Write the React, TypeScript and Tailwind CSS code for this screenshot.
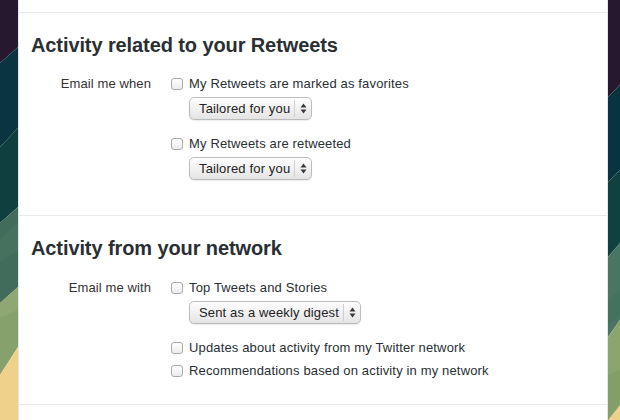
import React from "react";

const font = { fontFamily: '"Liberation Sans", Arial, Helvetica, sans-serif' };

function Checkbox() {
  return (
    <span className="block h-[12px] w-[12px] shrink-0 rounded-[3px] border border-[#a9a9a9] bg-[linear-gradient(#ffffff,#ececec)] shadow-[inset_0_1px_0_#fff]" />
  );
}

function Arrows() {
  return (
    <svg width="7" height="11" viewBox="0 0 7 11">
      <polygon points="3.5,0.5 6.5,4.5 0.5,4.5" fill="#3a3a3a" />
      <polygon points="0.5,6.5 6.5,6.5 3.5,10.5" fill="#3a3a3a" />
    </svg>
  );
}

function Select({ label }: { label: string }) {
  return (
    <div className="ml-[18px] mt-[4px] flex h-[23px] w-fit items-stretch rounded-[5px] border border-[#bcbcbc] bg-[linear-gradient(#fefefe,#e4e4e4)] shadow-[0_1px_1px_rgba(0,0,0,0.08)]">
      <span className="flex items-center pl-[9px] pr-[4px] text-[13px] leading-none tracking-[0.15px] text-[#222]">
        {label}
      </span>
      <span className="my-[2px] flex w-[17px] items-center justify-center border-l border-[#cfcfcf]">
        <Arrows />
      </span>
    </div>
  );
}

function CheckRow({ text, className = "" }: { text: string; className?: string }) {
  return (
    <div className={`flex h-[18px] items-center gap-[6px] ${className}`}>
      <Checkbox />
      <span className="text-[13px] leading-[18px] tracking-[0.15px] text-[#292f33]">{text}</span>
    </div>
  );
}

function LeftStrip() {
  return (
    <svg className="h-[420px] w-[18px] shrink-0" viewBox="0 0 18 420" preserveAspectRatio="none">
      <polygon points="0,0 18,0 18,47 0,63" fill="#25182f" />
      <polygon points="0,63 18,47 18,128 0,147" fill="#0a3440" />
      <polygon points="0,147 18,128 18,207 0,223" fill="#0f3f3e" />
      <polygon points="0,223 18,207 18,287 0,303" fill="#416c5c" />
      <polygon points="0,240 18,222 18,250 0,262" fill="#4a7461" opacity="0.6" />
      <polygon points="0,303 18,287 18,347 0,375" fill="#86a16c" />
      <polygon points="0,303 18,287 18,310 0,318" fill="#93aa72" opacity="0.7" />
      <polygon points="0,375 18,347 18,420 0,420" fill="#f0d18b" />
    </svg>
  );
}

function RightStrip() {
  return (
    <svg className="h-[420px] w-[12px] shrink-0" viewBox="0 0 12 420" preserveAspectRatio="none">
      <polygon points="0,0 12,0 12,85 0,97" fill="#25182f" />
      <polygon points="0,97 12,85 12,170 0,182" fill="#073440" />
      <polygon points="0,182 12,170 12,243 0,257" fill="#104140" />
      <polygon points="0,257 12,243 12,320 0,337" fill="#4a7562" />
      <polygon points="0,300 12,290 12,315 0,325" fill="#43705e" opacity="0.7" />
      <polygon points="0,337 12,320 12,420 0,420" fill="#8ca56e" />
      <polygon points="0,375 12,370 12,420 0,420" fill="#7d9a66" opacity="0.6" />
      <polygon points="0,420 12,405 12,420" fill="#efcf8a" />
    </svg>
  );
}

export default function App() {
  return (
    <div className="flex h-[420px] w-[620px] overflow-hidden" style={font}>
      <LeftStrip />
      <div className="flex w-[590px] shrink-0 flex-col border-x border-[#e1e8ed] bg-white">
        <div className="h-[12px]" />
        <section className="border-t border-[#e8e8e8] pb-[35px] pl-[12px] pt-[20px]">
          <h2 className="text-[20px] font-bold leading-[24px] tracking-[-0.1px] text-[#292f33]">
            Activity related to your Retweets
          </h2>
          <div className="mt-[18px] flex">
            <div className="w-[120px] text-right text-[13px] leading-[18px] tracking-[0.1px] text-[#333]">Email me when</div>
            <div className="ml-[20px] flex flex-col">
              <CheckRow text="My Retweets are marked as favorites" />
              <Select label="Tailored for you" />
              <CheckRow text="My Retweets are retweeted" className="mt-[15px]" />
              <Select label="Tailored for you" />
            </div>
          </div>
        </section>
        <section className="border-t border-[#e8e8e8] pb-[24px] pl-[12px] pt-[20px]">
          <h2 className="text-[20px] font-bold leading-[24px] tracking-[-0.1px] text-[#292f33]">
            Activity from your network
          </h2>
          <div className="mt-[19px] flex">
            <div className="w-[120px] text-right text-[13px] leading-[18px] tracking-[0.1px] text-[#333]">Email me with</div>
            <div className="ml-[20px] flex flex-col">
              <CheckRow text="Top Tweets and Stories" />
              <Select label="Sent as a weekly digest" />
              <CheckRow text="Updates about activity from my Twitter network" className="mt-[15px]" />
              <CheckRow text="Recommendations based on activity in my network" className="mt-[5px]" />
            </div>
          </div>
        </section>
        <div className="flex-1 border-t border-[#e8e8e8]" />
      </div>
      <RightStrip />
    </div>
  );
}
